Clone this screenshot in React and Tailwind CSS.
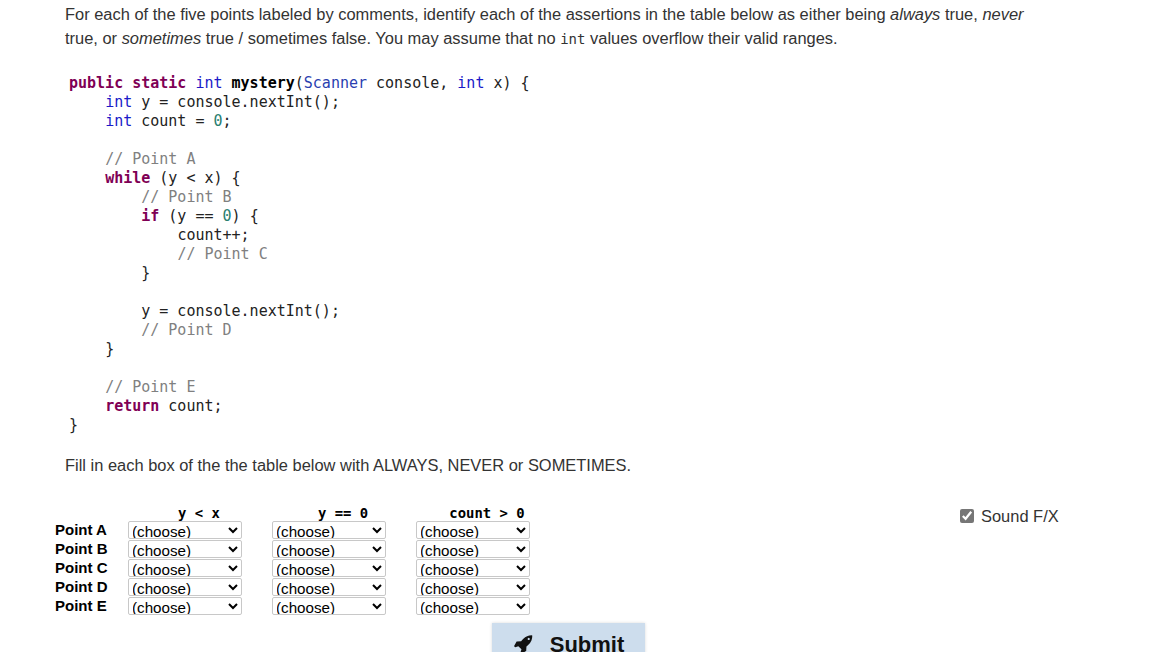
import React from "react";

const K = ({ children }) => <span className="font-bold text-[#7f0055]">{children}</span>;
const T = ({ children }) => <span className="text-[#1a1ac8]">{children}</span>;
const C = ({ children }) => <span className="text-[#808080]">{children}</span>;

const Code = () => (
  <pre className="ml-[69px] mt-[23px] font-['DejaVu_Sans_Mono',monospace] text-[15px] leading-[19px] text-[#222]">
    <K>public</K> <K>static</K> <T>int</T> <b className="text-black">mystery</b>(<span className="text-[#2a3fb0]">Scanner</span> console, <T>int</T> x) {"{"}{"\n"}
    {"    "}<T>int</T> y = console.nextInt();{"\n"}
    {"    "}<T>int</T> count = <span className="text-[#2a8070]">0</span>;{"\n"}
    {"\n"}
    {"    "}<C>// Point A</C>{"\n"}
    {"    "}<K>while</K> (y {"<"} x) {"{"}{"\n"}
    {"        "}<C>// Point B</C>{"\n"}
    {"        "}<K>if</K> (y == <span className="text-[#2a8070]">0</span>) {"{"}{"\n"}
    {"            "}count++;{"\n"}
    {"            "}<C>// Point C</C>{"\n"}
    {"        "}{"}"}{"\n"}
    {"\n"}
    {"        "}y = console.nextInt();{"\n"}
    {"        "}<C>// Point D</C>{"\n"}
    {"    "}{"}"}{"\n"}
    {"\n"}
    {"    "}<C>// Point E</C>{"\n"}
    {"    "}<K>return</K> count;{"\n"}
    {"}"}
  </pre>
);

const Sel = () => (
  <select className="w-[114px] h-[18px] block bg-white border border-[#c8c8c8] rounded-[2px] text-[15.2px] leading-[16px] py-0 pl-0 pr-[2px] indent-[-1px] text-black appearance-auto font-['Liberation_Sans',sans-serif]">
    <option>(choose)</option>
  </select>
);

const headers = ["y < x", "y == 0", "count > 0"];
const points = ["A", "B", "C", "D", "E"];

const Rocket = () => (
  <svg viewBox="0 0 1792 1792" className="w-[20px] h-[20px] mt-[5px] shrink-0" fill="#111">
    <path fillRule="evenodd" d="M1504 352q0-40-28-68t-68-28-68 28-28 68 28 68 68 28 68-28 28-68zM1728 64q0 249-75.5 430.5t-253.5 360.5q-81 80-195 176l-20 379q-2 16-16 26l-384 224q-7 4-16 4-12 0-23-9l-64-64q-13-14-8-32l85-276-281-281-276 85q-3 1-9 1-14 0-23-9l-64-64q-17-19-5-39l224-384q10-14 26-16l379-20q96-114 176-195 188-187 358-258t431-71q14 0 23 9t9 23z" />
  </svg>
);

export default function App() {
  return (
    <div className="h-[652px] overflow-hidden bg-white font-['Liberation_Sans',sans-serif] text-[#333]">
      <p className="ml-[65px] w-[975px] pt-[2px] text-[16.45px] leading-[24px]">
        For each of the five points labeled by comments, identify each of the assertions in the table below as either being <i>always</i> true, <i>never</i> true, or <i>sometimes</i> true / sometimes false. You may assume that no <code className="font-['DejaVu_Sans_Mono',monospace] text-[14px]">int</code> values overflow their valid ranges.
      </p>
      <Code />
      <p className="ml-[65px] mt-[18px] text-[16.45px] leading-[24px]">
        Fill in each box of the the table below with ALWAYS, NEVER or SOMETIMES.
      </p>
      <div className="flex mt-[28px]">
        <div className="ml-[55px] w-[866px]">
          <div className="flex flex-col">
            <div className="flex h-[16px]">
              <div className="w-[73px]" />
              <div className="flex gap-[30px] font-['DejaVu_Sans_Mono',monospace] text-[13.9px] font-bold leading-[16px] text-black whitespace-pre">
                {headers.map((h) => (
                  <div key={h} className="w-[114px] pl-[28px] text-center">{h}</div>
                ))}
              </div>
            </div>
            {points.map((p) => (
              <div key={p} className="flex h-[19px]">
                <div className="w-[73px] text-[15px] font-bold leading-[18px] text-black">Point {p}</div>
                <div className="flex gap-[30px]">
                  <Sel /><Sel /><Sel />
                </div>
              </div>
            ))}
          </div>
          <div className="ml-[437px] mt-[7px] w-[153px] h-[50px] bg-[#cddded] shadow-[0_0_3px_rgba(0,0,0,0.15)] flex items-start justify-center gap-[17px] pt-[7px]">
            <Rocket />
            <span className="text-[22px] font-bold leading-[30px] text-[#111]">Submit</span>
          </div>
        </div>
        <label className="ml-[39px] -mt-[1px] flex items-center self-start h-[24px] text-[16.45px] text-[#333]">
          <input type="checkbox" defaultChecked className="w-[14px] h-[14px] accent-[#767676] appearance-auto" />
          <span className="ml-[7px]">Sound F/X</span>
        </label>
      </div>
    </div>
  );
}
